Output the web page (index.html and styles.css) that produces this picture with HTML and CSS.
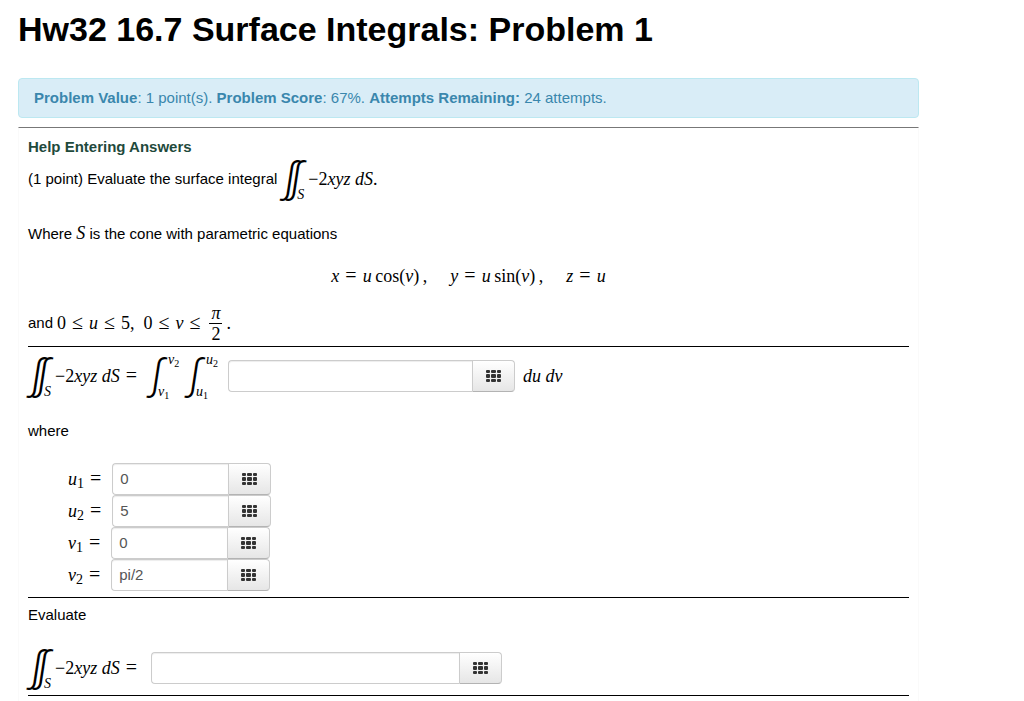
FILE: index.html
```html
<!DOCTYPE html>
<html lang="en">
<head>
    <meta charset="UTF-8">
    <meta name="viewport" content="width=device-width, initial-scale=1.0">
    <title>Hw32 16.7 Surface Integrals: Problem 1</title>
    <link rel="stylesheet" href="styles.css">
</head>
<body>
    <svg class="sprite" width="0" height="0" aria-hidden="true">
        <symbol id="keypad" viewBox="0 0 15 12">
            <rect x="0" y="0" width="4" height="3" rx="1"/>
            <rect x="5" y="0" width="5" height="3" rx="1"/>
            <rect x="11" y="0" width="4" height="3" rx="1"/>
            <rect x="0" y="4" width="4" height="4" rx="1"/>
            <rect x="5" y="4" width="5" height="4" rx="1"/>
            <rect x="11" y="4" width="4" height="4" rx="1"/>
            <rect x="0" y="9" width="4" height="3" rx="1"/>
            <rect x="5" y="9" width="5" height="3" rx="1"/>
            <rect x="11" y="9" width="4" height="3" rx="1"/>
        </symbol>
    </svg>

    <h1>Hw32 16.7 Surface Integrals: Problem 1</h1>

    <div class="alert"><b>Problem Value</b>: 1 point(s). <b>Problem Score</b>: 67%. <b>Attempts Remaining:</b> 24 attempts.</div>

    <form class="problem">
        <a class="help" href="#">Help Entering Answers</a>

        <div class="line">
            <span class="statement">(1 point) Evaluate the surface integral</span>
            <span class="integral double"><span class="sign">∫</span><span class="sign">∫</span><span class="region">S</span></span>
            <span class="math">−2<i>xyz</i> <i>dS</i>.</span>
        </div>

        <p>Where <span class="math"><i>S</i></span> is the cone with parametric equations</p>

        <div class="equations math">
            <span><i>x</i><span class="rel"> = </span><i>u</i>&thinsp;cos(<i>v</i>)&thinsp;,</span>
            <span><i>y</i><span class="rel"> = </span><i>u</i>&thinsp;sin(<i>v</i>)&thinsp;,</span>
            <span><i>z</i><span class="rel"> = </span><i>u</i></span>
        </div>

        <div class="bounds">
            <span>and</span>
            <span class="math">0<span class="rel"> ≤ </span><i>u</i><span class="rel"> ≤ </span>5,&nbsp; 0<span class="rel"> ≤ </span><i>v</i><span class="rel"> ≤ </span></span>
            <span class="fraction math"><i>π</i><span class="denominator">2</span></span>
            <span class="math">.</span>
        </div>

        <hr>

        <div class="line setup">
            <span class="integral double"><span class="sign">∫</span><span class="sign">∫</span><span class="region">S</span></span>
            <label class="math" for="integrand">−2<i>xyz</i> <i>dS</i><span class="rel"> =</span></label>
            <span class="integral single"><span class="sign">∫</span><span class="limits"><span class="upper"><i>v</i><sub>2</sub></span><span><i>v</i><sub>1</sub></span></span></span>
            <span class="integral single"><span class="sign">∫</span><span class="limits"><span class="upper"><i>u</i><sub>2</sub></span><span><i>u</i><sub>1</sub></span></span></span>
            <span class="answer medium">
                <input type="text" id="integrand">
                <button type="button" aria-label="Equation editor"><svg class="icon"><use href="#keypad"/></svg></button>
            </span>
            <span class="math"><i>du</i> <i>dv</i></span>
        </div>

        <p class="where">where</p>

        <div class="limit-list">
            <div class="limit">
                <label class="math" for="u1"><i>u</i><sub>1</sub><span class="rel"> =</span></label>
                <span class="answer small">
                    <input type="text" id="u1" value="0">
                    <button type="button" aria-label="Equation editor"><svg class="icon"><use href="#keypad"/></svg></button>
                </span>
            </div>
            <div class="limit">
                <label class="math" for="u2"><i>u</i><sub>2</sub><span class="rel"> =</span></label>
                <span class="answer small">
                    <input type="text" id="u2" value="5">
                    <button type="button" aria-label="Equation editor"><svg class="icon"><use href="#keypad"/></svg></button>
                </span>
            </div>
            <div class="limit">
                <label class="math" for="v1"><i>v</i><sub>1</sub><span class="rel"> =</span></label>
                <span class="answer small">
                    <input type="text" id="v1" value="0">
                    <button type="button" aria-label="Equation editor"><svg class="icon"><use href="#keypad"/></svg></button>
                </span>
            </div>
            <div class="limit">
                <label class="math" for="v2"><i>v</i><sub>2</sub><span class="rel"> =</span></label>
                <span class="answer small">
                    <input type="text" id="v2" value="pi/2">
                    <button type="button" aria-label="Equation editor"><svg class="icon"><use href="#keypad"/></svg></button>
                </span>
            </div>
        </div>

        <hr>

        <p class="evaluate">Evaluate</p>

        <div class="line result">
            <span class="integral double"><span class="sign">∫</span><span class="sign">∫</span><span class="region">S</span></span>
            <label class="math" for="value">−2<i>xyz</i> <i>dS</i><span class="rel"> =</span></label>
            <span class="answer large">
                <input type="text" id="value">
                <button type="button" aria-label="Equation editor"><svg class="icon"><use href="#keypad"/></svg></button>
            </span>
        </div>

        <hr>
    </form>
</body>
</html>
```
FILE: styles.css
```css
* {
    box-sizing: border-box;
}
body {
    margin: 0;
    padding: 9px 105px 0 18px;
    font-family: "Liberation Sans", Arial, sans-serif;
    font-size: 15px;
    line-height: 20px;
    color: #000;
    background-color: #fff;
}
.sprite {
    position: absolute;
}
h1 {
    margin: 0 0 29px;
    font-size: 34px;
    line-height: 40px;
}
.alert {
    margin-bottom: 9px;
    padding: 9px 15px;
    color: #3a87ad;
    background-color: #d9edf7;
    border: 1px solid #bce8f1;
    border-radius: 4px;
}
.problem {
    padding: 9px;
    border: 1px solid #fafafa;
    border-top-color: #777;
}
.help {
    display: block;
    font-weight: bold;
    color: #1f4a3c;
    text-decoration: none;
}
p {
    margin: 22px 0;
}
hr {
    height: 1px;
    margin: 3px 0 7px;
    border: 0;
    background-color: #000;
}
.math {
    font-family: "Liberation Serif", "Times New Roman", serif;
    font-size: 18px;
}
.rel {
    margin: 0 1px;
    font-size: 20px;
    line-height: 0;
}
sub {
    font-size: 14px;
    line-height: 0;
    vertical-align: -3px;
}

/* lines with tall integral signs */
.line {
    display: flex;
    align-items: center;
    height: 44px;
}
.integral {
    display: flex;
    height: 44px;
    padding-left: 4px;
    font-family: "Liberation Serif", "Times New Roman", serif;
    font-size: 14px;
}
.sign {
    width: 6px;
    font-family: Roboto, sans-serif;
    font-size: 42px;
    font-style: italic;
    font-weight: 300;
    line-height: 42px;
}
.double {
    margin-right: 4px;
}
.region {
    align-self: flex-end;
    line-height: 12px;
    font-style: italic;
}
.statement {
    margin-right: 4px;
}
.single {
    width: 38px;
}
.limits {
    display: flex;
    flex-direction: column;
    justify-content: space-between;
    line-height: 12px;
}
.limits sub {
    font-size: 10px;
}
.upper {
    padding-left: 10px;
}

.equations {
    display: flex;
    justify-content: center;
    gap: 23px;
}
.bounds {
    display: flex;
    align-items: center;
    gap: 4px;
    height: 40px;
    margin-top: 17px;
}
.fraction {
    display: flex;
    flex-direction: column;
    width: 13px;
    margin-left: 4px;
    text-align: center;
}
.denominator {
    border-top: 1px solid #000;
}

/* answer boxes */
.answer {
    display: flex;
    height: 32px;
}
.answer input {
    flex: 1;
    min-width: 0;
    padding: 4px 7px;
    font: inherit;
    color: #555;
    background-color: #fff;
    border: 1px solid #ccc;
    border-right: 0;
    border-radius: 4px 0 0 4px;
    box-shadow: inset 0 1px 1px rgba(0, 0, 0, 0.075);
}
.answer button {
    display: flex;
    align-items: center;
    justify-content: center;
    width: 43px;
    padding: 0;
    background: linear-gradient(#fff, #e6e6e6);
    border: 1px solid #ccc;
    border-bottom-color: #b3b3b3;
    border-radius: 0 4px 4px 0;
    cursor: pointer;
}
.icon {
    width: 15px;
    height: 12px;
    fill: #333;
}
.small {
    width: 159px;
}
.medium {
    width: 287px;
    margin: 0 8px 0 4px;
}
.large {
    width: 351px;
}
.setup label {
    margin-right: 10px;
}
.result label {
    margin-right: 13px;
}
.where {
    margin-top: 23px;
}
.limit-list {
    padding-left: 40px;
    margin-bottom: 6px;
}
.limit {
    display: flex;
    align-items: center;
    gap: 10px;
}
.evaluate {
    margin: 7px 0 21px;
}
.result {
    margin-bottom: 5px;
}
```
